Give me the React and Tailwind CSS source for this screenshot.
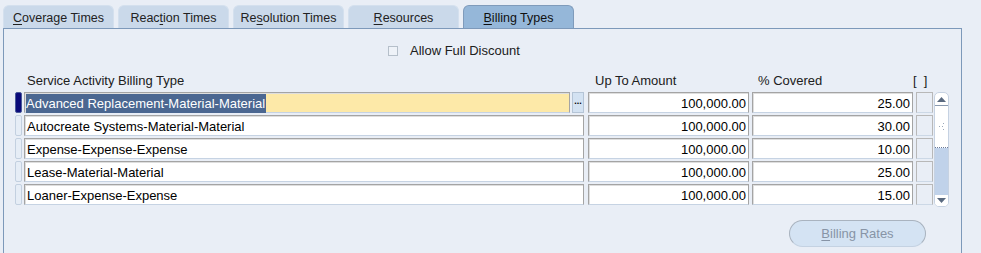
import React from 'react'

const TABS = [
  { pre: '', key: 'C', post: 'overage Times' },
  { pre: 'Reac', key: 't', post: 'ion Times' },
  { pre: 'Re', key: 's', post: 'olution Times' },
  { pre: '', key: 'R', post: 'esources' },
  { pre: '', key: 'B', post: 'illing Types', active: true },
]

const ROWS = [
  { type: 'Advanced Replacement-Material-Material', amount: '100,000.00', pct: '25.00', current: true },
  { type: 'Autocreate Systems-Material-Material', amount: '100,000.00', pct: '30.00' },
  { type: 'Expense-Expense-Expense', amount: '100,000.00', pct: '10.00' },
  { type: 'Lease-Material-Material', amount: '100,000.00', pct: '25.00' },
  { type: 'Loaner-Expense-Expense', amount: '100,000.00', pct: '15.00' },
]

const field =
  'h-[21px] border border-[#a4a4a4] border-b-[#c6d3e3] shadow-[inset_1px_1px_0_#dedede] flex items-center pt-[2px] text-[13px] text-black'

function Tab({ tab }) {
  return (
    <div
      className={`w-[111px] h-[23px] pt-[2px] rounded-t-[6px] border border-b-0 flex items-center justify-center text-[12.5px] ${
        tab.active
          ? 'bg-[#95b7d9] border-[#7f9bbb] text-[#101010]'
          : 'bg-[#cad9ea] border-[#d4e0ee] text-[#222]'
      }`}
    >
      <span>
        {tab.pre}
        <span className="underline underline-offset-2">{tab.key}</span>
        {tab.post}
      </span>
    </div>
  )
}

function Row({ row }) {
  return (
    <div className="flex items-center h-[21px]">
      <div
        className={`w-[7px] h-[21px] rounded-[2px] ${
          row.current ? 'bg-[#0a0a7a] border border-[#4a5a9a]' : 'border border-[#c3d0e0] bg-[#e6edf6]'
        }`}
      />
      <div className="ml-[2px] w-[560px] flex gap-[2px]">
        {row.current ? (
          <>
            <div className={`${field} w-[546px] bg-[#fde9a8] pl-[1px]`}>
              <span className="bg-[#4b6791] text-white pr-[1px]">{row.type}</span>
            </div>
            <div className="w-[12px] h-[21px] bg-[#d3e2f2] border border-[#b4c4d6] flex items-center justify-center text-[9px] font-bold leading-none text-black pb-[2px]">
              ...
            </div>
          </>
        ) : (
          <div className={`${field} w-[560px] bg-white pl-[2px]`}>{row.type}</div>
        )}
      </div>
      <div className={`${field} ml-[4px] w-[161px] bg-white justify-end pr-[2px]`}>{row.amount}</div>
      <div className={`${field} ml-[3px] w-[161px] bg-white justify-end pr-[2px]`}>{row.pct}</div>
      <div className="ml-[3px] w-[17px] h-[21px] border border-[#b8b8b8] border-b-[#ccd8e6] bg-[#e9eef6]" />
    </div>
  )
}

function Scrollbar() {
  return (
    <div className="w-[15px] h-[115px] rounded-[5px] border border-[#c6d2e2] bg-white flex flex-col overflow-hidden">
      <div className="h-[13px] flex items-center justify-center border-b border-[#8a9ab0]">
        <svg width="9" height="5" viewBox="0 0 9 5">
          <path d="M0 5 L4.5 0 L9 5 Z" fill="#5a6a80" />
        </svg>
      </div>
      <div className="h-[42px] flex items-center justify-center border-b border-dotted border-[#6a7a98]">
        <svg width="7" height="7" viewBox="0 0 7 7">
          <rect x="5" y="0" width="1" height="1" fill="#9aa8ba" />
          <rect x="1" y="3" width="1" height="1" fill="#9aa8ba" />
          <rect x="4" y="3" width="1" height="1" fill="#9aa8ba" />
          <rect x="5" y="6" width="1" height="1" fill="#9aa8ba" />
        </svg>
      </div>
      <div className="flex-1 bg-[#c0d2ea]" />
      <div className="h-[11px] flex items-center justify-center bg-white">
        <svg width="9" height="5" viewBox="0 0 9 5">
          <path d="M0 0 L9 0 L4.5 5 Z" fill="#5a6a80" />
        </svg>
      </div>
    </div>
  )
}

export default function App() {
  return (
    <div className="w-[981px] h-[253px] bg-[#e9eef6] overflow-hidden font-['Liberation_Sans',Arial,sans-serif]">
      {/* Tabs */}
      <div className="flex items-end gap-[4px] pl-[3px] pt-[5px]">
        {TABS.map((t, i) => (
          <Tab key={i} tab={t} />
        ))}
      </div>

      {/* Panel */}
      <div className="ml-[3px] w-[959px] h-[230px] border border-b-0 border-[#7d99ba] flex flex-col">
        <div className="h-[16px] mt-[14px] flex items-center pl-[384px] text-[13px] text-[#202020]">
          <div className="w-[10px] h-[10px] border border-[#b5bfca] bg-[#eef2f8]" />
          <span className="ml-[12px]">Allow Full Discount</span>
        </div>

        <div className="h-[16px] mt-[14px] flex items-center text-[13px] text-[#202020] pl-[23px]">
          <span className="w-[568px]">Service Activity Billing Type</span>
          <span className="w-[163px]">Up To Amount</span>
          <span className="w-[155px]">% Covered</span>
          <span>[&nbsp;&nbsp;]</span>
        </div>

        <div className="mt-[3px] pl-[11px] flex gap-[1px]">
          <div className="flex flex-col gap-[2px]">
            {ROWS.map((r, i) => (
              <Row key={i} row={r} />
            ))}
          </div>
          <Scrollbar />
        </div>

        <div className="mt-[13px] flex justify-end pr-[35px]">
          <div className="w-[137px] h-[27px] rounded-full bg-[#d4e3f3] border border-[#a9b3bf] border-b-[#c4d2e2] flex items-center justify-center text-[13px] text-[#8794a6]">
            <span>
              <span className="underline underline-offset-2">B</span>illing Rates
            </span>
          </div>
        </div>
      </div>
    </div>
  )
}
